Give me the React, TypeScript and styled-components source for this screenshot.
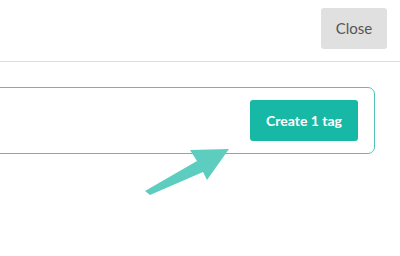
import styled, { createGlobalStyle } from "styled-components";

const GlobalStyle = createGlobalStyle`
    html, body {
        margin: 0;
        padding: 0;
        background: #ffffff;
        font-family: Lato, "Open Sans", sans-serif;
        overflow: hidden;
    }
`

const Page = styled.div`
    position: relative;
    width: 400px;
    height: 256px;
    overflow: hidden;
`

const Header = styled.div`
    display: flex;
    justify-content: flex-end;
    align-items: center;
    height: 62px;
    padding-right: 13px;
    border-bottom: 1px solid #dedede;
    box-sizing: border-box;
`

const CloseButton = styled.button`
    width: 66px;
    height: 41px;
    margin-top: -5px;
    border: none;
    border-radius: 3px;
    background: #e0e0e0;
    color: #555555;
    font-family: Lato, sans-serif;
    font-size: 15px;
    padding: 0;
`

const Body = styled.div`
    padding-top: 25px;
`

const TagBox = styled.div`
    display: flex;
    justify-content: flex-end;
    align-items: center;
    margin-left: -20px;
    width: 395px;
    height: 67px;
    box-sizing: border-box;
    border: 1.5px solid #4fc4b5;
    border-radius: 0 7px 7px 0;
    padding-right: 16px;
`

const CreateButton = styled.button`
    width: 108px;
    height: 41px;
    border: none;
    border-radius: 3px;
    background: #18b8a6;
    color: #ffffff;
    font-family: Lato, sans-serif;
    font-weight: 700;
    font-size: 14px;
    padding: 0;
`

const Arrow = styled.svg`
    position: absolute;
    left: 0;
    top: 0;
    pointer-events: none;
`

export default function App() {
    return (
        <Page>
            <GlobalStyle />
            <Header>
                <CloseButton>Close</CloseButton>
            </Header>
            <Body>
                <TagBox>
                    <CreateButton>Create 1 tag</CreateButton>
                </TagBox>
            </Body>
            <Arrow width="400" height="256">
                <polygon
                    points="145,191 197,161 190,150 229,149 207,180 203,172 150,195"
                    fill="#5ccdbf"
                />
            </Arrow>
        </Page>
    );
}
